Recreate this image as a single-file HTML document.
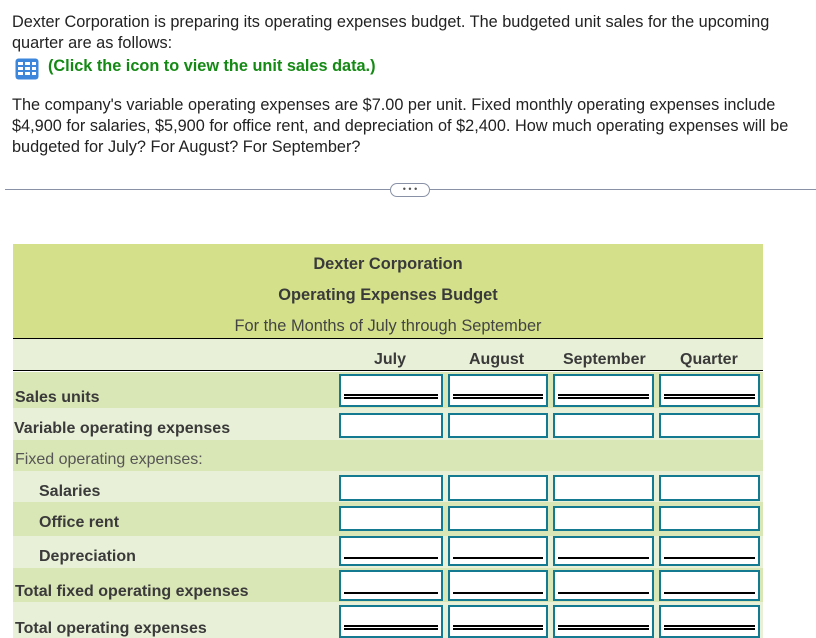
<!DOCTYPE html><html><head><style>
body{margin:0;width:816px;height:638px;overflow:hidden;background:#fff;font-family:"Liberation Sans",Arial,sans-serif;color:#222;position:relative}
.a{position:absolute;white-space:nowrap}
.t{font-size:16.3px;line-height:21px}
.bar{position:absolute;left:13px;width:750px}
.lab{position:absolute;font-size:16px;font-weight:bold;color:#3a3a3a}
.box{position:absolute;background:#fff;border:2px solid #137a91;box-sizing:border-box}
.u1{position:absolute;left:3px;right:3px;border-bottom:2px solid #000}
.u2{position:absolute;left:3px;right:3px;height:1px;border-top:2px solid #000;border-bottom:2px solid #000}
</style></head><body>
<div class="a t" style="left:12px;top:12px">Dexter Corporation is preparing its operating expenses budget. The budgeted unit sales for the upcoming<br>quarter are as follows:</div>
<svg class="a" style="left:15px;top:58px" width="24" height="22" viewBox="0 0 24 22"><rect x="0.5" y="0.5" width="23" height="21" rx="3" fill="#3c86dc"/><g fill="#fff"><rect x="3" y="4" width="5" height="3"/><rect x="10" y="4" width="5" height="3"/><rect x="17" y="4" width="4" height="3"/><rect x="3" y="9" width="5" height="3"/><rect x="10" y="9" width="5" height="3"/><rect x="17" y="9" width="4" height="3"/><rect x="3" y="14" width="5" height="3"/><rect x="10" y="14" width="5" height="3"/><rect x="17" y="14" width="4" height="3"/></g></svg>
<div class="a" style="left:48px;top:57px;font-size:16.3px;font-weight:bold;color:#148a14">(Click the icon to view the unit sales data.)</div>
<div class="a t" style="left:12px;top:95px">The company's variable operating expenses are $7.00 per unit. Fixed monthly operating expenses include<br>$4,900 for salaries, $5,900 for office rent, and depreciation of $2,400. How much operating expenses will be<br>budgeted for July? For August? For September?</div>
<div class="a" style="left:5px;top:189px;width:811px;border-top:1px solid #8891a6"></div>
<div class="a" style="left:390px;top:183px;width:38px;height:12px;border:1px solid #8891a6;border-radius:7px;background:#fff;font-size:9px;line-height:10px;text-align:center;color:#555">• • •</div>

<div class="bar" style="top:244px;height:94px;background:#d4e18a"></div>
<div class="a" style="left:0;width:776px;top:255px;text-align:center;font-size:16.4px;font-weight:bold;color:#3a3a3a">Dexter Corporation</div>
<div class="a" style="left:0;width:776px;top:286px;text-align:center;font-size:16.4px;font-weight:bold;color:#3a3a3a">Operating Expenses Budget</div>
<div class="a" style="left:0;width:776px;top:317px;text-align:center;font-size:16.4px;color:#444">For the Months of July through September</div>
<div class="bar" style="top:338px;height:31px;background:#e8f1d8;border-top:1.5px solid #000;border-bottom:1.5px solid #000"></div>
<div class="lab" style="left:374px;top:351px">July</div>
<div class="lab" style="left:469px;top:351px">August</div>
<div class="lab" style="left:563px;top:351px">September</div>
<div class="lab" style="left:680px;top:351px">Quarter</div>

<div class="bar" style="top:372px;height:36px;background:#d9e6b5"></div>
<div class="bar" style="top:408px;height:32px;background:#e8f1d8"></div>
<div class="bar" style="top:440px;height:31px;background:#d9e6b5"></div>
<div class="bar" style="top:471px;height:31px;background:#e8f1d8"></div>
<div class="bar" style="top:502px;height:34px;background:#d9e6b5"></div>
<div class="bar" style="top:536px;height:32px;background:#e8f1d8"></div>
<div class="bar" style="top:568px;height:34px;background:#d9e6b5"></div>
<div class="bar" style="top:602px;height:36px;background:#e8f1d8"></div>

<div class="lab" style="left:15px;top:389px">Sales units</div>
<div class="lab" style="left:14px;top:420px">Variable operating expenses</div>
<div class="a" style="left:15px;top:451px;font-size:16px;color:#555">Fixed operating expenses:</div>
<div class="lab" style="left:39px;top:483px">Salaries</div>
<div class="lab" style="left:39px;top:514px">Office rent</div>
<div class="lab" style="left:39px;top:548px">Depreciation</div>
<div class="lab" style="left:15px;top:583px">Total fixed operating expenses</div>
<div class="lab" style="left:15px;top:620px">Total operating expenses</div>

<div id="boxes"></div>
<script>
var cols=[[339,104],[448,100],[553,101],[659,101]];
var rows=[[374,33,2],[413,25,0],[475,26,0],[506,25,0],[536,30,1],[570,31,1],[605,33,2]];
var h='';
rows.forEach(function(r){cols.forEach(function(c){
var u='';
if(r[2]==2)u='<div class="u2" style="bottom:6px"></div>';
if(r[2]==1)u='<div class="u1" style="bottom:5px"></div>';
h+='<div class="box" style="left:'+c[0]+'px;top:'+r[0]+'px;width:'+c[1]+'px;height:'+r[1]+'px">'+u+'</div>';});});
document.getElementById('boxes').innerHTML=h;
</script>
</body></html>
